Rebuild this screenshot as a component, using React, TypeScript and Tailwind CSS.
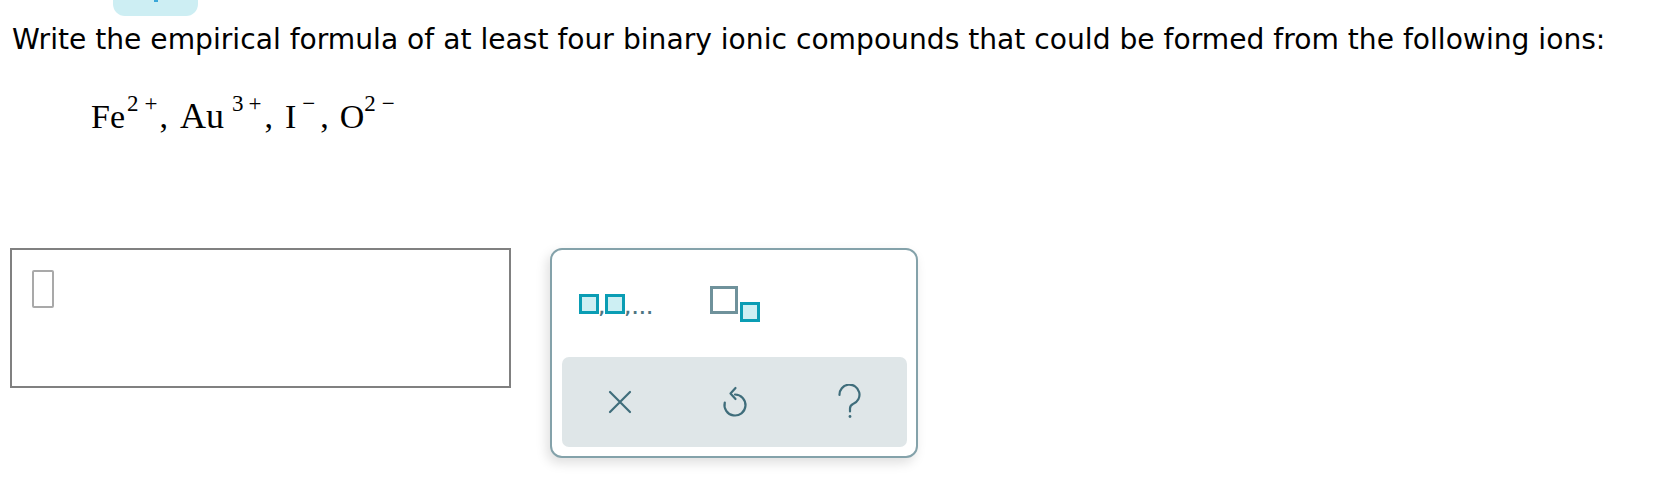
import React from 'react';

const iconColor = '#3f6d7b';

// little answer-slot square used on the keypad buttons
const Slot = () => (
  <div className="w-[20px] h-[20px] border-[3px] border-[#0a9db4] bg-[#cdeff3]" />
);

const App = () => {
  const sup = "text-[23px] leading-none align-[17px]";

  return (
    <div className="w-full h-[480px] bg-white font-['DejaVu_Sans',Verdana,sans-serif] text-black overflow-hidden">
      {/* collapsed tab */}
      <div className="ml-[113px] w-[85px] h-[16px] rounded-b-[12px] bg-[#cdeef3] flex justify-center">
        <div className="w-[4px] h-[2px] bg-[#3aa7d8]" />
      </div>

      <p className="mt-[7px] pl-[12px] text-[28.15px] leading-[33px] whitespace-nowrap">
        Write the empirical formula of at least four binary ionic compounds that could be formed from the following ions:
      </p>

      {/* ions */}
      <div className="mt-[36px] pl-[91px] font-['Liberation_Serif','Times_New_Roman',serif] text-[34px] leading-[34px] whitespace-nowrap">
        <span>Fe</span>
        <span className={`${sup} ml-[2px]`}>2</span>
        <span className={`${sup} ml-[6px]`}>+</span>
        <span className="ml-[2px]">,</span>
        <span className="inline-block w-[47px] ml-[12px] text-[36px] leading-[34px]">Au</span>
        <span className={`${sup} ml-[5px]`}>3</span>
        <span className={`${sup} ml-[5px]`}>+</span>
        <span className="ml-[3px]">,</span>
        <span className="ml-[12px]">I</span>
        <span className={`${sup} ml-[6px]`}>−</span>
        <span className="ml-[5px]">,</span>
        <span className="ml-[11px]">O</span>
        <span className={sup}>2</span>
        <span className={`${sup} ml-[6px]`}>−</span>
      </div>

      <div className="mt-[114px] pl-[10px] flex items-start">
        {/* answer box */}
        <div className="w-[501px] h-[140px] border-2 border-[#808080] pt-[20px] pl-[20px]">
          <div className="w-[22px] h-[38px] border-2 border-[#a9a9a9] rounded-[2px]" />
        </div>

        {/* keypad */}
        <div className="ml-[39px] w-[368px] h-[210px] border-2 border-[#84a2aa] rounded-[12px] bg-white shadow-[-3px_5px_12px_rgba(0,0,0,0.13)] pl-[10px] pr-[9px] pb-[9px] flex flex-col">
          <div className="h-[107px] grid grid-cols-3 items-center">
            <div className="flex justify-center">
              <div className="flex items-end mr-[6px] text-[#4d7582] font-bold text-[15px] leading-none">
                <Slot />
                <span className="w-[6px] -mb-[3px]">,</span>
                <Slot />
                <span className="-mb-[3px] tracking-[1.5px]">,...</span>
              </div>
            </div>
            <div className="flex justify-center">
              <div className="h-[36px] flex">
                <div className="w-[28px] h-[28px] border-[3px] border-[#6f929b] self-start" />
                <div className="ml-[2px] self-end">
                  <Slot />
                </div>
              </div>
            </div>
            <div />
          </div>

          <div className="flex-1 rounded-[7px] bg-[#dfe6e8] grid grid-cols-3 items-center">
            <div className="flex justify-center">
              <svg width="24" height="24" viewBox="0 0 24 24" fill="none" stroke={iconColor} strokeWidth="2.2" strokeLinecap="round">
                <path d="M2 2L22 22M22 2L2 22" />
              </svg>
            </div>
            <div className="flex justify-center">
              <svg width="26" height="32" viewBox="0 0 26 32" fill="none" stroke={iconColor} strokeWidth="2.2" strokeLinecap="round" strokeLinejoin="round">
                <path d="M13 8.5A10.5 10.5 0 1 1 2.8 16.5" />
                <path d="M13.5 2L8.5 7.5L13.5 13" />
              </svg>
            </div>
            <div className="flex justify-center">
              <svg width="26" height="36" viewBox="0 0 26 36" fill="none" stroke={iconColor} strokeWidth="2.2" strokeLinecap="round">
                <path d="M2.5 11A10 10 0 1 1 16 20C14 21 13 22.5 13 24.5V27.5" />
                <circle cx="13" cy="32.5" r="1.4" fill={iconColor} stroke="none" />
              </svg>
            </div>
          </div>
        </div>
      </div>
    </div>
  );
};

export default App;
